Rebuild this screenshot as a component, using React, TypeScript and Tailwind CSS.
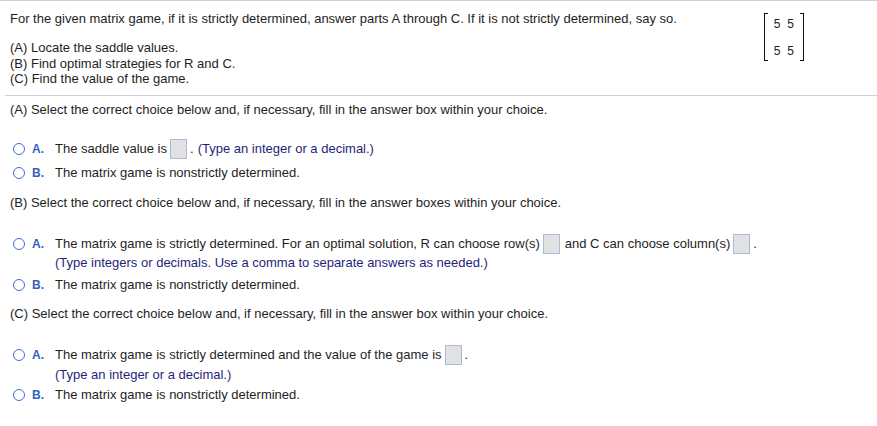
import React from "react";

function Radio({ letter }: { letter: string }) {
  return (
    <div className="flex items-center shrink-0 w-[55px]">
      <span className="ml-[13px] h-[12px] w-[12px] rounded-full border border-[#3f6fc7] bg-white" />
      <span className="ml-[7px] font-bold text-[#3560c0] text-[12px]">{letter}.</span>
    </div>
  );
}

function Box() {
  return (
    <span className="inline-block align-middle mx-[3px] h-[20px] w-[17px] bg-[#e2e2e2] border border-[#a9bbdd]" />
  );
}

export default function App() {
  return (
    <div
      className="w-[877px] h-[426px] bg-white text-[#1e1e1e] text-[13px] border-t border-[#ccd2dc]"
      style={{ fontFamily: '"Liberation Sans", Arial, sans-serif' }}
    >
      {/* Question header */}
      <div className="flex justify-between pl-[10px] pr-[73px]">
        <div className="pt-[10px] leading-[16px]">
          <p>
            For the given matrix game, if it is strictly determined, answer parts A through C. If it is not strictly determined, say so.
          </p>
          <div className="mt-[13px] leading-[15.5px]">
            <p>(A) Locate the saddle values.</p>
            <p>(B) Find optimal strategies for R and C.</p>
            <p>(C) Find the value of the game.</p>
          </div>
        </div>
        <div className="mt-[12px] flex h-[48px] items-stretch">
          <span className="w-[4px] border-y border-l border-[#111]" />
          <div className="grid grid-cols-2 gap-x-[7px] gap-y-[9px] px-[6px] pt-[4px] text-[12px] leading-[15px]">
            <span>5</span>
            <span>5</span>
            <span>5</span>
            <span>5</span>
          </div>
          <span className="w-[4px] border-y border-r border-[#111]" />
        </div>
      </div>

      <div className="ml-[5px] mt-[8px] border-t border-[#ccd2dc]" />

      {/* Part A */}
      <p className="pl-[10px] mt-[6px] leading-[16px]">
        (A) Select the correct choice below and, if necessary, fill in the answer box within your choice.
      </p>
      <div className="mt-[20px] flex items-center h-[22px]">
        <Radio letter="A" />
        <span>The saddle value is</span>
        <Box />
        <span>.</span>
        <span className="ml-[4px] text-[#1f1f7a]">(Type an integer or a decimal.)</span>
      </div>
      <div className="mt-[2px] flex items-center h-[22px]">
        <Radio letter="B" />
        <span>The matrix game is nonstrictly determined.</span>
      </div>

      {/* Part B */}
      <p className="pl-[10px] mt-[11px] leading-[16px]">
        (B) Select the correct choice below and, if necessary, fill in the answer boxes within your choice.
      </p>
      <div className="mt-[22px] flex items-center h-[22px]">
        <Radio letter="A" />
        <span>The matrix game is strictly determined. For an optimal solution, R can choose row(s)</span>
        <Box />
        <span className="ml-[2px]">and C can choose column(s)</span>
        <Box />
        <span>.</span>
      </div>
      <p className="pl-[55px] -mt-[1px] leading-[18px] text-[#1f1f7a]">
        (Type integers or decimals. Use a comma to separate answers as needed.)
      </p>
      <div className="mt-[2px] flex items-center h-[22px]">
        <Radio letter="B" />
        <span>The matrix game is nonstrictly determined.</span>
      </div>

      {/* Part C */}
      <p className="pl-[10px] mt-[10px] leading-[16px]">
        (C) Select the correct choice below and, if necessary, fill in the answer box within your choice.
      </p>
      <div className="mt-[22px] flex items-center h-[22px]">
        <Radio letter="A" />
        <span>The matrix game is strictly determined and the value of the game is</span>
        <Box />
        <span>.</span>
      </div>
      <p className="pl-[55px] leading-[18px] text-[#1f1f7a]">(Type an integer or a decimal.)</p>
      <div className="flex items-center h-[22px]">
        <Radio letter="B" />
        <span>The matrix game is nonstrictly determined.</span>
      </div>
    </div>
  );
}
